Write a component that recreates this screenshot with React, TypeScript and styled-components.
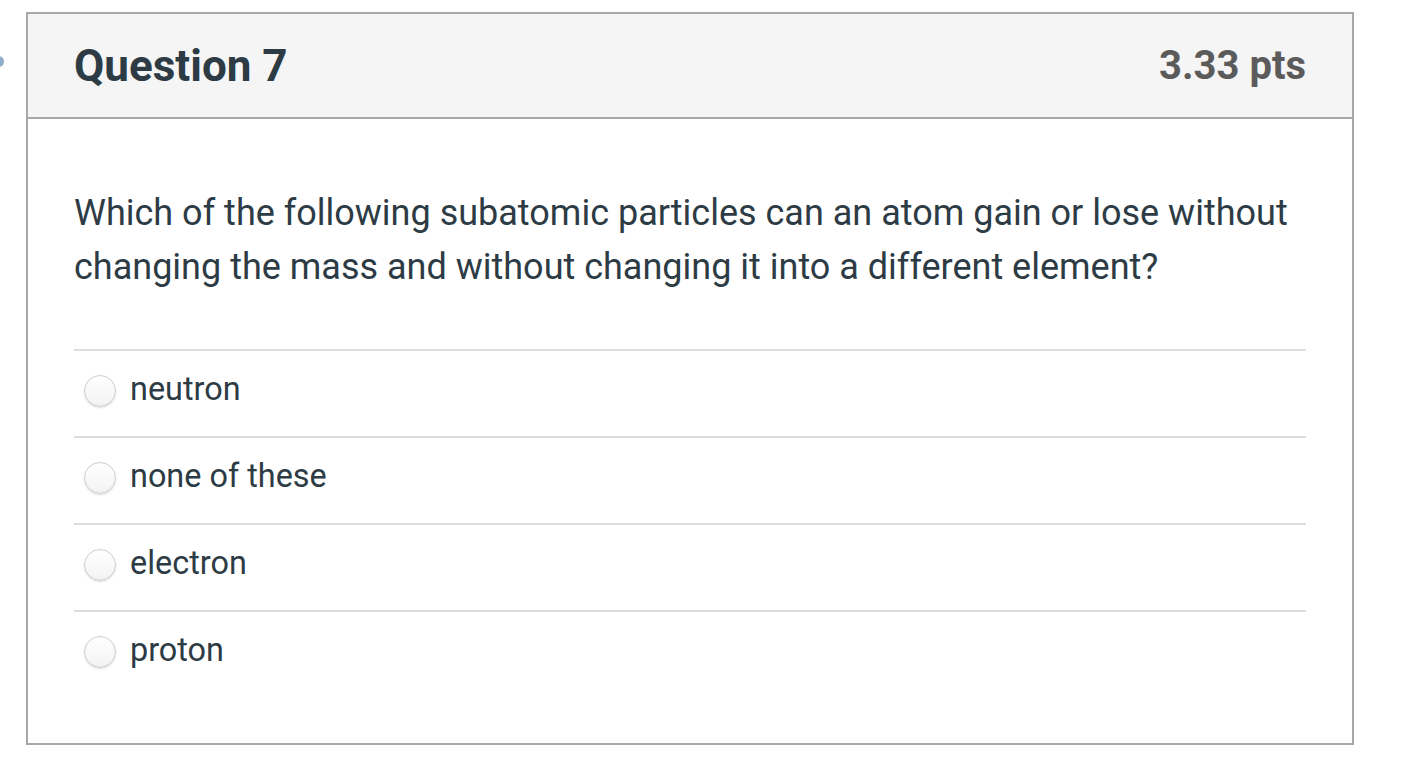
import styled, { createGlobalStyle } from 'styled-components';

const GlobalStyle = createGlobalStyle`
  html, body {
    margin: 0;
    padding: 0;
    background: #fff;
    font-family: Roboto, "Liberation Sans", Arial, sans-serif;
  }
`;

const Page = styled.div`
  position: relative;
  padding: 12px 0 0 26px;
`;

const Marker = styled.div`
  position: absolute;
  left: -8px;
  top: 53px;
  width: 13px;
  height: 13px;
  color: #7d9dc0;
`;

const Card = styled.div`
  width: 1324px;
  border: 2px solid #a8a8a8;
  background: #fff;
`;

const Header = styled.div`
  display: flex;
  align-items: center;
  justify-content: space-between;
  height: 103px;
  padding: 0 46px;
  background: #f5f5f5;
  border-bottom: 2px solid #a8a8a8;
`;

const Title = styled.h2`
  margin: 0;
  font-size: 44px;
  font-weight: 700;
  color: #2d3b45;
`;

const Points = styled.div`
  font-size: 40px;
  font-weight: 700;
  color: #5b5b5b;
`;

const Body = styled.div`
  padding: 67px 46px 46px;
`;

const Prompt = styled.p`
  margin: 0 0 55px;
  font-size: 36px;
  line-height: 54px;
  color: #2d3b45;
`;

const Answers = styled.div`
  display: flex;
  flex-direction: column;
`;

const Answer = styled.label`
  display: flex;
  align-items: center;
  gap: 14px;
  height: 87px;
  box-sizing: border-box;
  padding: 0 0 10px 10px;
  border-top: 2px solid #dedede;
  font-size: 32.4px;
  color: #2d3b45;
  cursor: pointer;
`;

const Radio = styled.span`
  width: 30px;
  height: 30px;
  border-radius: 50%;
  border: 1px solid #cfcfcf;
  background: linear-gradient(#ffffff, #f3f3f3);
  box-shadow: 0 1px 2px rgba(0, 0, 0, 0.12), inset 0 -1px 1px rgba(0, 0, 0, 0.04);
  flex-shrink: 0;
  margin-top: 4px;
`;

const answers = ['neutron', 'none of these', 'electron', 'proton'];

export default function App() {
  return (
    <>
      <GlobalStyle />
      <Page>
        <Marker>
          <svg viewBox="0 0 13 13" width="13" height="13">
            <circle cx="6.5" cy="6.5" r="5.5" fill="currentColor" opacity="0.85" />
          </svg>
        </Marker>
        <Card>
          <Header>
            <Title>Question 7</Title>
            <Points>3.33 pts</Points>
          </Header>
          <Body>
            <Prompt>
              Which of the following subatomic particles can an atom gain or lose without
              changing the mass and without changing it into a different element?
            </Prompt>
            <Answers>
              {answers.map((a) => (
                <Answer key={a}>
                  <Radio />
                  {a}
                </Answer>
              ))}
            </Answers>
          </Body>
        </Card>
      </Page>
    </>
  );
}
